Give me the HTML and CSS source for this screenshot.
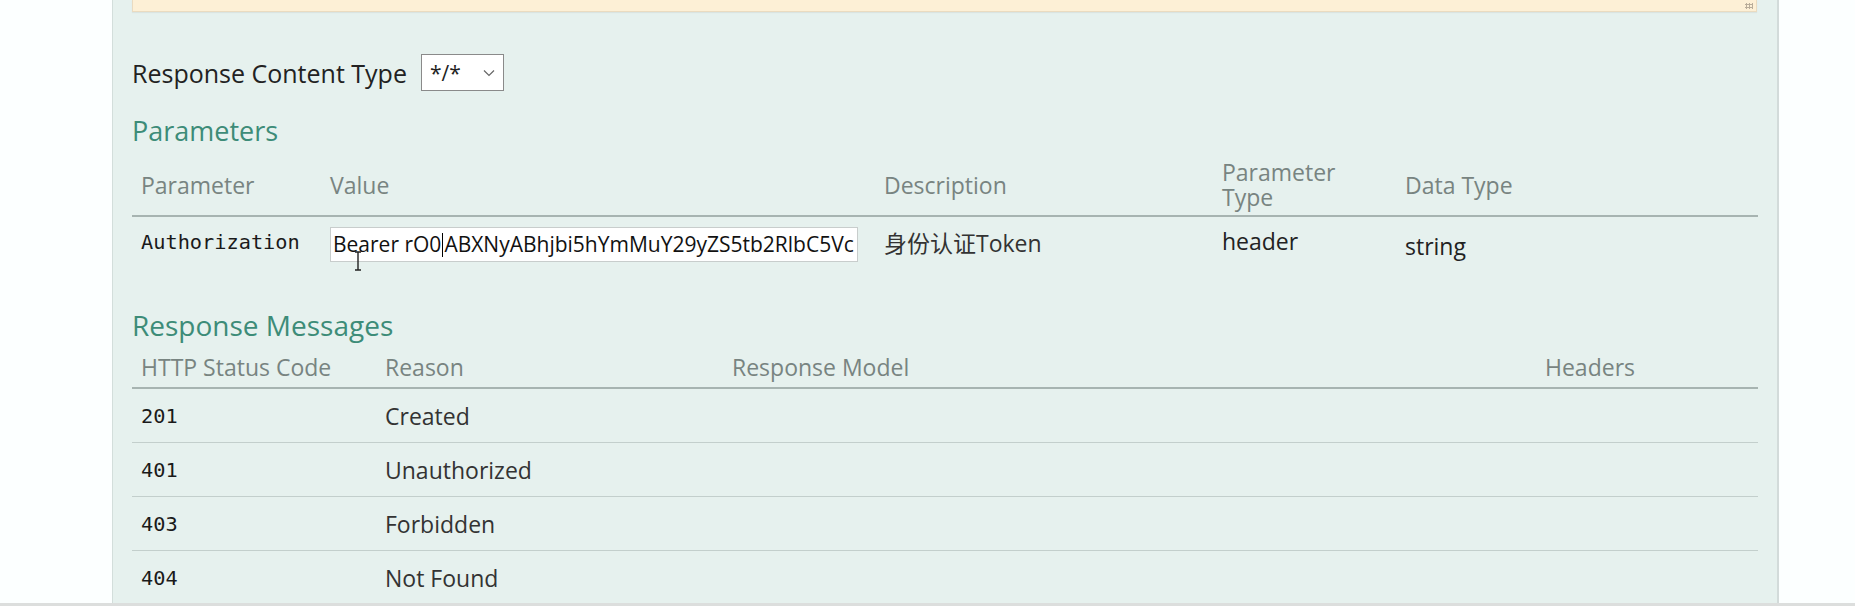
FILE: index.html
```html
<!DOCTYPE html>
<html lang="en">
<head>
    <meta charset="UTF-8">
    <meta name="viewport" content="width=device-width, initial-scale=1.0">
    <title>Swagger - Operation</title>
    <link rel="stylesheet" href="styles.css">
</head>
<body>
    <div class="operation">
        <div class="content">
            <div class="sample-body">
                <span class="grip"></span>
            </div>

            <div class="content-type">
                <label>Response Content Type</label>
                <div class="select-box">
                    <span>*/*</span>
                    <svg width="12" height="8" viewBox="0 0 12 8"><path d="M1 1.5 L6 6.5 L11 1.5" fill="none" stroke="#666" stroke-width="1.2"/></svg>
                </div>
            </div>

            <h4>Parameters</h4>
            <table class="params">
                <thead>
                    <tr>
                        <th class="col-name">Parameter</th>
                        <th class="col-value">Value</th>
                        <th class="col-desc">Description</th>
                        <th class="col-ptype">Parameter<br>Type</th>
                        <th class="col-dtype">Data Type</th>
                    </tr>
                </thead>
                <tbody>
                    <tr>
                        <td class="code">Authorization</td>
                        <td class="value">
                            <div class="text-input">Bearer rO0<span class="caret"></span>ABXNyABhjbi5hYmMuY29yZS5tb2RlbC5Vc</div>
                            <svg class="ibeam" width="10" height="20" viewBox="0 0 10 20"><path d="M2 1 H8 M5 1 V19 M2 19 H8" fill="none" stroke="#222" stroke-width="1.4"/></svg>
                        </td>
                        <td class="desc">身份认证Token</td>
                        <td class="ptype">header</td>
                        <td class="dtype">string</td>
                    </tr>
                </tbody>
            </table>

            <h4 class="responses-title">Response Messages</h4>
            <table class="responses">
                <thead>
                    <tr>
                        <th class="col-status">HTTP Status Code</th>
                        <th class="col-reason">Reason</th>
                        <th class="col-model">Response Model</th>
                        <th class="col-headers">Headers</th>
                    </tr>
                </thead>
                <tbody>
                    <tr><td class="code">201</td><td>Created</td><td></td><td></td></tr>
                    <tr><td class="code">401</td><td>Unauthorized</td><td></td><td></td></tr>
                    <tr><td class="code">403</td><td>Forbidden</td><td></td><td></td></tr>
                    <tr><td class="code">404</td><td>Not Found</td><td></td><td></td></tr>
                </tbody>
            </table>
        </div>
    </div>

    <div class="scrollbar"></div>
</body>
</html>
```

FILE: styles.css
```css
html, body {
    height: 100%;
}

body {
    margin: 0;
    padding: 0;
    overflow: hidden;
    background-color: #fcffff;
    font-family: "Open Sans", "Noto Sans CJK SC", sans-serif;
    color: #333;
}

.operation {
    padding-left: 112px;
}

.content {
    width: 1627px;
    height: 640px;
    padding: 0 18px 0 19px;
    background-color: #e6f1ee;
    border-left: 1px solid #d3dedb;
    border-right: 2px solid #d3dbda;
}

.sample-body {
    position: relative;
    height: 11px;
    width: 1623px;
    background-color: #fdf0d6;
    border: 1px solid #eadbc0;
    border-top: none;
    box-shadow: 0 1px 1px rgba(0, 0, 0, 0.05);
}

.grip {
    position: absolute;
    right: 3px;
    bottom: 2px;
    width: 8px;
    height: 6px;
    background-image: radial-gradient(circle, #b9ad9a 1px, transparent 1.2px);
    background-size: 3px 3px;
}

.content-type {
    display: flex;
    align-items: center;
    height: 37px;
    margin-top: 42px;
    font-size: 25px;
    color: #222;
}

.content-type label {
    margin-right: 14px;
}

.select-box {
    display: flex;
    align-items: center;
    justify-content: space-between;
    box-sizing: border-box;
    width: 83px;
    height: 37px;
    padding: 0 8px 0 8px;
    background-color: #fff;
    border: 1px solid #8a8a8a;
    font-size: 21px;
}

h4 {
    margin: 25px 0 0 0;
    font-size: 27px;
    line-height: 30px;
    font-weight: normal;
    color: #3d8c78;
}

h4.responses-title {
    margin-top: 34px;
    font-size: 28px;
}

table {
    width: 1626px;
    border-collapse: collapse;
    table-layout: fixed;
    font-size: 23px;
}

th {
    padding: 3px 9px 5px 9px;
    line-height: 25px;
    text-align: left;
    font-weight: normal;
    color: #788481;
    border-bottom: 2px solid #a7b4b1;
}

td {
    padding: 0 9px;
    vertical-align: middle;
}

td.code {
    font-family: "DejaVu Sans Mono", monospace;
    font-size: 20.3px;
    color: #1a1a1a;
}

.params {
    margin-top: 11px;
}

.params td {
    position: relative;
    padding-top: 0;
}

.params td.value {
    padding-top: 10px;
    padding-bottom: 14px;
}

.params td.code {
    padding-bottom: 10px;
}

.col-name { width: 171px; }
.col-value { width: 536px; }
.col-desc { width: 320px; }
.col-ptype { width: 165px; }
.col-dtype { width: 344px; }

.text-input {
    box-sizing: border-box;
    width: 528px;
    height: 35px;
    padding: 0 2px;
    overflow: hidden;
    white-space: nowrap;
    line-height: 33px;
    font-size: 21px;
    color: #111;
    background-color: #fff;
    border: 1px solid #c8cdcc;
}

.caret {
    display: inline-block;
    width: 1px;
    height: 24px;
    margin: 0 1px;
    vertical-align: -5px;
    background-color: #000;
}

.ibeam {
    position: absolute;
    left: 32px;
    top: 34px;
}

.desc {
    padding-bottom: 10px;
    color: #333;
}

.ptype {
    padding-bottom: 11px;
    color: #222;
}

.dtype {
    padding-bottom: 2px;
    color: #222;
}

.responses {
    margin-top: 10px;
}

.responses th {
    padding-top: 5px;
    padding-bottom: 7px;
}

.responses td {
    height: 53px;
    padding-top: 0;
    padding-bottom: 0;
    border-bottom: 1px solid #c3cfcc;
}

.col-status { width: 226px; }
.col-reason { width: 329px; }
.col-model { width: 795px; }
.col-headers { width: 204px; }

.scrollbar {
    position: fixed;
    left: 0;
    right: 0;
    bottom: 0;
    height: 3px;
    background-color: #dcdedd;
}
```
